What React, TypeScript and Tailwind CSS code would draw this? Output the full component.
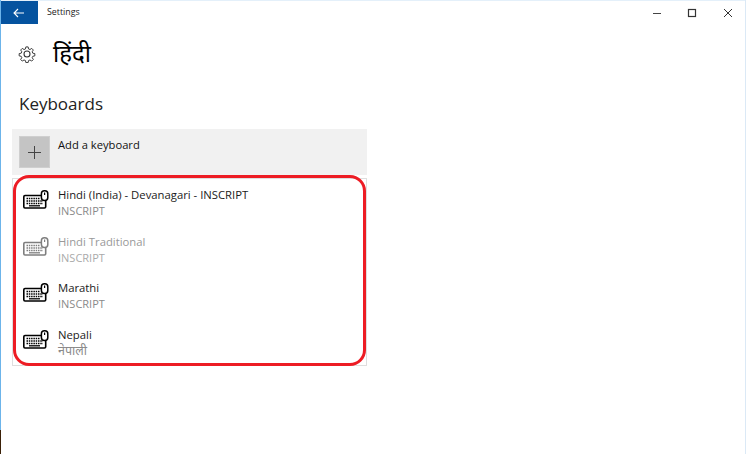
const Keyboard = ({ dim }: { dim?: boolean }) => (
  <svg width="26" height="19" viewBox="0 0 26 19" className={dim ? "opacity-50" : ""} fill="none">
    <path d="M18 5.500H2Q.8 5.500 .8 6.700V16.800Q.8 18 2 18H21.500Q22.700 18 22.700 16.800V10" stroke="#000" strokeWidth="1.600" />
    <path d="M3.500 8.500h13.500M3.500 11h16.500M3.500 13.500h16.500" stroke="#000" strokeWidth="1.300" strokeDasharray="1.500 .8" />
    <path d="M6 15.800h11" stroke="#000" strokeWidth="1.300" />
    <rect x="18.400" y=".8" width="6.400" height="9.600" rx="3" fill="#fff" stroke="#000" strokeWidth="1.500" />
    <path d="M21.600 2.500v2.500" stroke="#000" strokeWidth="1.200" />
  </svg>
);

const rows = [
  { name: "Hindi (India) - Devanagari - INSCRIPT", sub: "INSCRIPT" },
  { name: "Hindi Traditional", sub: "INSCRIPT", dim: true },
  { name: "Marathi", sub: "INSCRIPT" },
  { name: "Nepali", sub: "नेपाली", large: true },
];

export default function App() {
  return (
    <div className="relative flex h-[454px] w-[750px] overflow-hidden bg-white font-['Open_Sans','Noto_Sans',sans-serif] text-black">
      <div className="flex w-[1px] flex-col">
        <div className="h-[430px] bg-[#6cb4ea]" />
        <div className="flex-1 bg-[#3a2008]" />
      </div>
      <div className="flex w-[745px] flex-col border-r border-[#dbe9f6]">
        <header className="flex h-[24px] items-center border-t border-[#e4f0fa]">
          <div className="flex h-[23px] w-[37px] items-center justify-center bg-[#05539f]">
            <svg width="12" height="10" viewBox="0 0 12 10" fill="none" stroke="#fff" strokeWidth="1.100" className="mr-[2px]">
              <path d="M1 5h10M5 1 1 5l4 4" />
            </svg>
          </div>
          <span className="ml-[9px] text-[8.800px] text-[#222]">Settings</span>
          <div className="ml-auto flex items-center">
            <svg width="10" height="10" viewBox="0 0 10 10" className="mr-[25px]" stroke="#444" fill="none">
              <path d="M1 5.500h8" />
            </svg>
            <svg width="10" height="10" viewBox="0 0 10 10" className="mr-[26px]" stroke="#333" fill="none">
              <rect x="1.500" y="1.500" width="7" height="7" strokeWidth="1.200" />
            </svg>
            <svg width="10" height="10" viewBox="0 0 10 10" className="mr-[12px]" stroke="#333" fill="none">
              <path d="M1 1l8 8M9 1l-8 8" />
            </svg>
          </div>
        </header>
        <div className="mt-[13px] flex h-[34px] items-center pl-[17px]">
          <svg width="18" height="18" viewBox="0 0 24 24" fill="none" stroke="#333" strokeWidth="1.400" strokeLinejoin="round">
            <path d="M10.300 1.500h3.400l.6 3 2.100.9 2.600-1.700 2.400 2.400-1.700 2.600.9 2.100 3 .6v3.400l-3 .6-.9 2.100 1.700 2.600-2.400 2.400-2.600-1.700-2.100.9-.6 3h-3.400l-.6-3-2.100-.9-2.600 1.700-2.400-2.400 1.700-2.600-.9-2.100-3-.6v-3.400l3-.6.9-2.100-1.700-2.600 2.400-2.400 2.600 1.700 2.100-.9z" transform="translate(1.200 1.200) scale(.9)" />
            <circle cx="12" cy="12" r="4" />
          </svg>
          <span className="ml-[17px] mb-[2px] font-['Noto_Sans','Open_Sans',sans-serif] text-[24px] leading-none">हिंदी</span>
        </div>
        <h2 className="ml-[18px] mt-[21px] text-[17px] leading-[24px] text-[#222]">Keyboards</h2>
        <section className="ml-[11px] mt-[13px] w-[355px]">
          <div className="flex h-[46px] items-start bg-[#f1f1f1] pl-[7px] pt-[7px]">
            <div className="flex h-[32px] w-[31px] items-center justify-center border border-[#cfcfcf] bg-[#c4c4c4]">
              <svg width="13" height="13" viewBox="0 0 13 13" stroke="#444" strokeWidth="1">
                <path d="M6.500 0v13M0 6.500h13" />
              </svg>
            </div>
            <span className="ml-[8px] mt-[1px] text-[11.200px] leading-[16px] text-[#111]">Add a keyboard</span>
          </div>
          <div className="mt-[3px] h-[188px] border border-[#dedede] bg-white pl-[10px] pt-[8px]">
            {rows.map((r) => (
              <div key={r.name} className="flex h-[46.500px] items-start">
                <div className="mt-[3px] w-[35px]"><Keyboard dim={r.dim} /></div>
                <div className="flex flex-col">
                  <span className={`text-[11.300px] leading-[16px] ${r.dim ? "text-[#999]" : "text-[#1a1a1a]"}`}>{r.name}</span>
                  <span className={`${r.large ? "text-[12.500px]" : "text-[11px]"} leading-[15px] ${r.dim ? "text-[#aaa]" : "text-[#8a8a8a]"}`}>{r.sub}</span>
                </div>
              </div>
            ))}
          </div>
        </section>
      </div>
      <div className="pointer-events-none absolute left-[13px] top-[175px] h-[191px] w-[353px] rounded-[16px] border-[3px] border-[#ed1c24]" />
    </div>
  );
}
